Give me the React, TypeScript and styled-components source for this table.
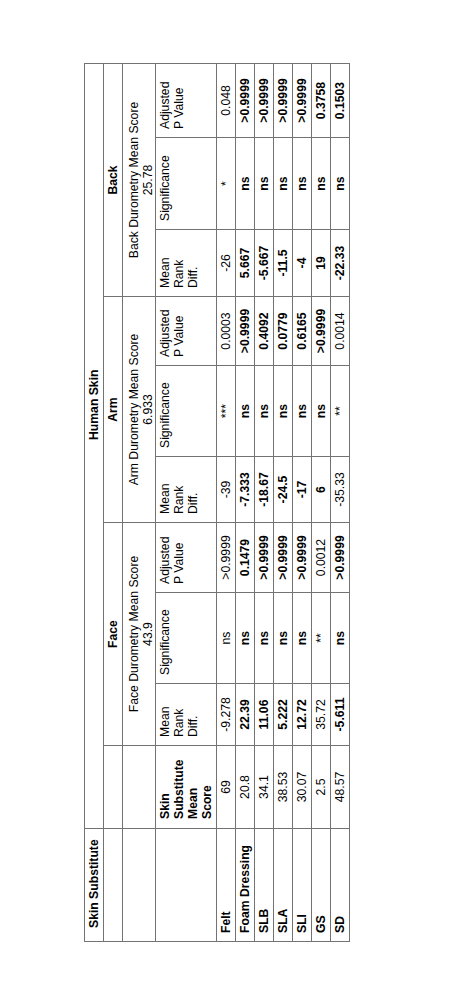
import React from "react";
import styled, { createGlobalStyle } from "styled-components";

const GlobalStyle = createGlobalStyle`
  html, body {
    margin: 0;
    padding: 0;
    background: #ffffff;
  }
  body {
    font-family: "Liberation Sans", Arial, sans-serif;
    color: #000;
  }
`;

const TABLE_W = 878;
const TABLE_H = 265;

const Page = styled.div`
  padding: 64px 0 0 84px;
`;

const RotatedFrame = styled.div`
  width: ${TABLE_H}px;
  height: ${TABLE_W}px;
`;

const Table = styled.table`
  width: ${TABLE_W}px;
  table-layout: fixed;
  border-collapse: collapse;
  transform-origin: 0 0;
  transform: translateY(${TABLE_W}px) rotate(-90deg);
  font-family: "Liberation Sans", Arial, sans-serif;
  font-size: 12.2px;
  line-height: 14px;
  color: #000;
`;

const Row = styled.tr<{ $h: number }>`
  height: ${(p) => p.$h}px;
`;

const Cell = styled.td<{
  $align?: "left" | "center";
  $bold?: boolean;
  $top?: number;
  $noLeft?: boolean;
  $noRight?: boolean;
  $pad?: number;
}>`
  border: 1px solid #737373;
  ${(p) => (p.$noLeft ? "border-left: none;" : "")}
  ${(p) => (p.$noRight ? "border-right: none;" : "")}
  padding: ${(p) => p.$top ?? 0}px 3px 0 ${(p) => p.$pad ?? 3}px;
  text-align: ${(p) => p.$align ?? "center"};
  vertical-align: ${(p) => (p.$top !== undefined ? "top" : "middle")};
  font-weight: ${(p) => (p.$bold ? 700 : 400)};
  white-space: nowrap;
  overflow: hidden;
`;

const colWidths = [113, 83, 62, 91, 70, 66, 91, 69, 67, 92, 74];

type Val = [string, boolean];

const data: { name: string; score: string; cells: Val[] }[] = [
  {
    name: "Felt",
    score: "69",
    cells: [
      ["-9.278", false], ["ns", false], [">0.9999", false],
      ["-39", false], ["***", false], ["0.0003", false],
      ["-26", false], ["*", false], ["0.048", false],
    ],
  },
  {
    name: "Foam Dressing",
    score: "20.8",
    cells: [
      ["22.39", true], ["ns", true], ["0.1479", true],
      ["-7.333", true], ["ns", true], [">0.9999", true],
      ["5.667", true], ["ns", true], [">0.9999", true],
    ],
  },
  {
    name: "SLB",
    score: "34.1",
    cells: [
      ["11.06", true], ["ns", true], [">0.9999", true],
      ["-18.67", true], ["ns", true], ["0.4092", true],
      ["-5.667", true], ["ns", true], [">0.9999", true],
    ],
  },
  {
    name: "SLA",
    score: "38.53",
    cells: [
      ["5.222", true], ["ns", true], [">0.9999", true],
      ["-24.5", true], ["ns", true], ["0.0779", true],
      ["-11.5", true], ["ns", true], [">0.9999", true],
    ],
  },
  {
    name: "SLI",
    score: "30.07",
    cells: [
      ["12.72", true], ["ns", true], [">0.9999", true],
      ["-17", true], ["ns", true], ["0.6165", true],
      ["-4", true], ["ns", true], [">0.9999", true],
    ],
  },
  {
    name: "GS",
    score: "2.5",
    cells: [
      ["35.72", false], ["**", false], ["0.0012", false],
      ["6", true], ["ns", true], [">0.9999", true],
      ["19", true], ["ns", true], ["0.3758", true],
    ],
  },
  {
    name: "SD",
    score: "48.57",
    cells: [
      ["-5.611", true], ["ns", true], [">0.9999", true],
      ["-35.33", false], ["**", false], ["0.0014", false],
      ["-22.33", true], ["ns", true], ["0.1503", true],
    ],
  },
];

const sites = [
  { name: "Face", label: "Face Durometry Mean Score", value: "43.9" },
  { name: "Arm", label: "Arm Durometry Mean Score", value: "6.933" },
  { name: "Back", label: "Back Durometry Mean Score", value: "25.78" },
];

export default function App() {
  return (
    <>
      <GlobalStyle />
      <Page>
        <RotatedFrame>
          <Table>
            <colgroup>
              {colWidths.map((w, i) => (
                <col key={i} style={{ width: w }} />
              ))}
            </colgroup>
            <tbody>
              <Row $h={19}>
                <Cell $align="left" $bold $pad={13}>
                  Skin Substitute
                </Cell>
                <Cell $noRight />
                <Cell colSpan={9} $bold $noLeft>
                  Human Skin
                </Cell>
              </Row>
              <Row $h={19}>
                <Cell />
                <Cell />
                {sites.map((s) => (
                  <Cell key={s.name} colSpan={3} $bold>
                    {s.name}
                  </Cell>
                ))}
              </Row>
              <Row $h={33}>
                <Cell />
                <Cell />
                {sites.map((s) => (
                  <Cell key={s.name} colSpan={3} $top={4}>
                    {s.label}
                    <br />
                    {s.value}
                  </Cell>
                ))}
              </Row>
              <Row $h={61}>
                <Cell $top={2} />
                <Cell $top={2} $align="left" $bold $pad={9}>
                  Skin
                  <br />
                  Substitute
                  <br />
                  Mean
                  <br />
                  Score
                </Cell>
                {sites.map((s) => (
                  <React.Fragment key={s.name}>
                    <Cell $top={2} $align="left" $pad={8}>
                      Mean
                      <br />
                      Rank
                      <br />
                      Diff.
                    </Cell>
                    <Cell $top={2} $align="left" $pad={8}>
                      Significance
                    </Cell>
                    <Cell $top={2} $align="left" $pad={8}>
                      Adjusted
                      <br />P Value
                    </Cell>
                  </React.Fragment>
                ))}
              </Row>
              {data.map((r) => (
                <Row $h={19} key={r.name}>
                  <Cell $align="left" $bold $pad={8}>
                    {r.name}
                  </Cell>
                  <Cell>{r.score}</Cell>
                  {r.cells.map(([v, b], i) => (
                    <Cell key={i} $bold={b}>
                      {v}
                    </Cell>
                  ))}
                </Row>
              ))}
            </tbody>
          </Table>
        </RotatedFrame>
      </Page>
    </>
  );
}
